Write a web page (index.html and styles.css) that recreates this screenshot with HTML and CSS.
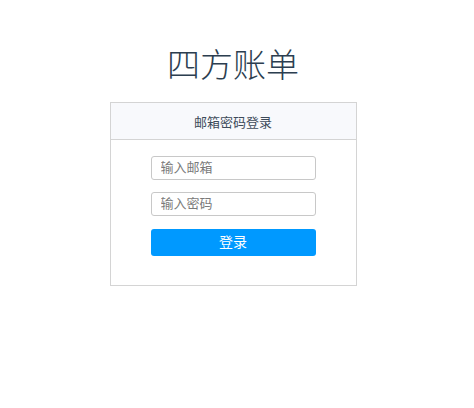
FILE: index.html
```html
<!DOCTYPE html>
<html lang="zh">
<head>
<meta charset="utf-8">
<title>四方账单</title>
<link rel="stylesheet" href="styles.css">
</head>
<body>
<div class="page">
  <h1 class="title">四方账单</h1>
  <div class="card">
    <div class="card-header">邮箱密码登录</div>
    <div class="card-body">
      <input class="field" type="text" placeholder="输入邮箱">
      <input class="field" type="password" placeholder="输入密码">
      <button class="btn" type="button">登录</button>
    </div>
  </div>
</div>
</body>
</html>
```
FILE: styles.css
```css
html, body {
  margin: 0;
  padding: 0;
  background: #ffffff;
}
body {
  font-family: "Noto Sans CJK SC", "Noto Sans", sans-serif;
  color: #2c3e50;
}
.page {
  display: flex;
  flex-direction: column;
  align-items: center;
  padding-top: 39px;
  padding-right: 8px;
}
.title {
  margin: 0;
  font-size: 33px;
  font-weight: 300;
  line-height: 48px;
  color: #2c3e50;
}
.card {
  margin-top: 15px;
  width: 245px;
  border: 1px solid #d4d4d4;
  display: flex;
  flex-direction: column;
}
.card-header {
  height: 36px;
  background: #f8f9fc;
  border-bottom: 1px solid #d4d4d4;
  display: flex;
  align-items: center;
  justify-content: center;
  font-size: 13px;
  color: #3d4b5a;
}
.card-body {
  display: flex;
  flex-direction: column;
  align-items: center;
  gap: 12px;
  padding: 16px 0 29px;
}
.field {
  box-sizing: border-box;
  width: 165px;
  height: 24px;
  margin: 0;
  padding: 0 9px 3px;
  border: 1px solid #c8c8c8;
  border-radius: 3px;
  font-family: inherit;
  font-size: 13px;
  color: #333;
  outline: none;
}
.field::placeholder {
  color: #7a7a7a;
}
.btn {
  box-sizing: border-box;
  width: 165px;
  height: 27px;
  margin-top: 1px;
  border: none;
  border-radius: 3px;
  background: #0099ff;
  color: #ffffff;
  font-family: inherit;
  font-size: 14px;
  padding: 0 0 3px;
}
```
